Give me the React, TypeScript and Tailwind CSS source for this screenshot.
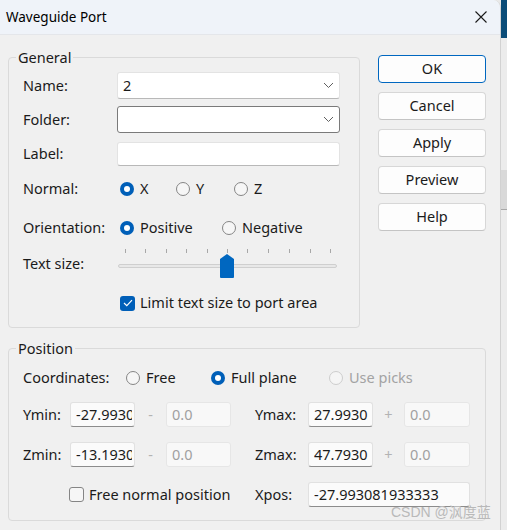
import React from 'react';

function Chevron() {
  return (
    <svg width="11" height="7" viewBox="0 0 11 7" className="shrink-0">
      <path d="M1 1 L5.5 5.5 L10 1" fill="none" stroke="#606060" strokeWidth="1" />
    </svg>
  );
}

function Combo({ value, focused }: { value?: string; focused?: boolean }) {
  return (
    <div
      className={
        focused
          ? 'w-[223px] h-full flex items-center justify-between pl-[5px] pr-[5px] bg-white rounded-[3px] border border-[#7a7a7a]'
          : 'w-[223px] h-full flex items-center justify-between pl-[5px] pr-[5px] bg-white rounded-[3px] border border-[#e3e3e3] border-b-[#b8b8b8]'
      }
    >
      <span>{value}</span>
      <Chevron />
    </div>
  );
}

function Radio({ label, checked, disabled }: { label: string; checked?: boolean; disabled?: boolean }) {
  return (
    <div className={disabled ? 'flex items-center gap-[6px] text-[#a3a3a3]' : 'flex items-center gap-[6px]'}>
      {checked ? (
        <span className="w-[14px] h-[14px] rounded-full bg-[#005fb8] flex items-center justify-center">
          <span className="w-[6px] h-[6px] rounded-full bg-white" />
        </span>
      ) : (
        <span
          className={
            disabled
              ? 'w-[14px] h-[14px] rounded-full bg-[#f5f5f5] border border-[#cdcdcd]'
              : 'w-[14px] h-[14px] rounded-full bg-[#f6f6f6] border border-[#858585]'
          }
        />
      )}
      <span>{label}</span>
    </div>
  );
}

function Check({ label, checked }: { label: string; checked?: boolean }) {
  return (
    <div className="flex items-center gap-[5px]">
      {checked ? (
        <span className="w-[15px] h-[15px] rounded-[3px] bg-[#005fb8] flex items-center justify-center">
          <svg width="10" height="8" viewBox="0 0 10 8">
            <path d="M1 4 L3.8 6.6 L9 1.2" fill="none" stroke="white" strokeWidth="1.2" />
          </svg>
        </span>
      ) : (
        <span className="w-[15px] h-[15px] rounded-[3px] bg-[#f6f6f6] border border-[#858585]" />
      )}
      <span>{label}</span>
    </div>
  );
}

function Field({ value, w }: { value: string; w: string }) {
  return (
    <div
      className={`${w} h-full flex items-center bg-[#fbfbfb] rounded-[3px] border border-[#e1e1e1] border-b-[#8c8c8c] pl-[5px] pr-[2px]`}
    >
      <div className="min-w-0 overflow-hidden whitespace-nowrap">{value}</div>
    </div>
  );
}

function Disabled({ w }: { w: string }) {
  return (
    <div className={`${w} h-full flex items-center bg-[#f8f8f8] rounded-[3px] border border-[#e6e6e6] pl-[5px] text-[#a0a0a0]`}>
      0.0
    </div>
  );
}

function Btn({ label, primary }: { label: string; primary?: boolean }) {
  return (
    <div
      className={
        primary
          ? 'h-[28px] flex items-center justify-center bg-[#fdfdfd] rounded-[4px] border border-[#0067c0]'
          : 'h-[28px] flex items-center justify-center bg-[#fdfdfd] rounded-[4px] border border-[#d7d7d7] border-b-[#c4c4c4]'
      }
    >
      {label}
    </div>
  );
}

function Slider() {
  const ticks = [8, 28, 49, 69, 90, 110, 130, 151, 172, 193, 213];
  return (
    <svg width="221" height="36" viewBox="0 0 221 36">
      {ticks.map((x) => (
        <line key={x} x1={x + 0.5} y1="3" x2={x + 0.5} y2="7" stroke="#a8a8a8" strokeWidth="1" />
      ))}
      <rect x="1.5" y="18.5" width="218" height="3" rx="1.5" fill="#e8e8e8" stroke="#cfcfcf" strokeWidth="1" />
      <path d="M103 13 L110 8 L117 13 L117 31 Q117 32 116 32 L104 32 Q103 32 103 31 Z" fill="#0067c0" />
    </svg>
  );
}

export default function App() {
  return (
    <div className="w-[507px] h-[530px] flex overflow-hidden relative bg-[#e9e9e9] font-['Noto_Sans','Noto_Sans_CJK_SC',sans-serif] text-[14.5px] text-[#1b1b1b]">
      {/* dialog window */}
      <div className="w-[501px] h-[530px] flex flex-col bg-[#f0f0f0] rounded-tr-[8px] border-r border-[#d2d2d2] overflow-hidden">
        {/* title bar */}
        <div className="h-[35px] shrink-0 flex items-center justify-between pl-[6px] pr-[13px] bg-[#eff3f9] border-b border-[#e4e6ea]">
          <span className="text-[13.5px] text-black">Waveguide Port</span>
          <svg width="12" height="12" viewBox="0 0 12 12">
            <path d="M0.5 0.5 L11.5 11.5 M11.5 0.5 L0.5 11.5" stroke="#1a1a1a" strokeWidth="1.1" />
          </svg>
        </div>

        {/* top: general + buttons */}
        <div className="flex pl-[8px] pt-[12px]">
          <fieldset className="w-[352px] border border-[#dadada] rounded-[4px] pl-[7px] pb-[14px]">
            <legend className="px-[2px] leading-[20px]">General</legend>
            <div className="pl-[7px] pt-[5px] flex flex-col">
              <div className="h-[27px] flex items-center">
                <span className="w-[94px]">Name:</span>
                <Combo value="2" />
              </div>
              <div className="h-[27px] mt-[7px] flex items-center">
                <span className="w-[94px]">Folder:</span>
                <Combo focused />
              </div>
              <div className="h-[24px] mt-[9px] flex items-center">
                <span className="w-[94px]">Label:</span>
                <div className="w-[223px] h-full bg-white rounded-[3px] border border-[#e3e3e3] border-b-[#b8b8b8]" />
              </div>
              <div className="h-[24px] mt-[11px] flex items-center">
                <span className="w-[97px]">Normal:</span>
                <div className="w-[56px]">
                  <Radio label="X" checked />
                </div>
                <div className="w-[58px]">
                  <Radio label="Y" />
                </div>
                <Radio label="Z" />
              </div>
              <div className="h-[24px] mt-[15px] flex items-center">
                <span className="w-[97px]">Orientation:</span>
                <div className="w-[102px]">
                  <Radio label="Positive" checked />
                </div>
                <Radio label="Negative" />
              </div>
              <div className="h-[36px] mt-[6px] flex items-center">
                <span className="w-[94px]">Text size:</span>
                <Slider />
              </div>
              <div className="h-[20px] mt-[11px] flex items-center pl-[97px]">
                <Check label="Limit text size to port area" checked />
              </div>
            </div>
          </fieldset>

          <div className="w-[108px] ml-[18px] mt-[8px] flex flex-col gap-[9px]">
            <Btn label="OK" primary />
            <Btn label="Cancel" />
            <Btn label="Apply" />
            <Btn label="Preview" />
            <Btn label="Help" />
          </div>
        </div>

        {/* position */}
        <fieldset className="ml-[8px] mt-[10px] w-[478px] border border-[#dadada] rounded-[4px] pl-[7px] pb-[13px]">
          <legend className="px-[2px] leading-[20px]">Position</legend>
          <div className="pl-[7px] pt-[10px] flex flex-col">
            <div className="h-[20px] flex items-center">
              <span className="w-[103px]">Coordinates:</span>
              <div className="w-[85px]">
                <Radio label="Free" />
              </div>
              <div className="w-[118px]">
                <Radio label="Full plane" checked />
              </div>
              <Radio label="Use picks" disabled />
            </div>
            <div className="h-[25px] mt-[14px] flex items-center">
              <span className="w-[47px]">Ymin:</span>
              <Field value="-27.9930" w="w-[65px]" />
              <span className="w-[31px] text-center text-[#b3b3b3]">-</span>
              <Disabled w="w-[65px]" />
              <span className="w-[53px] ml-[24px]">Ymax:</span>
              <Field value="27.9930" w="w-[65px]" />
              <span className="w-[31px] text-center text-[#b3b3b3]">+</span>
              <Disabled w="w-[66px]" />
            </div>
            <div className="h-[25px] mt-[15px] flex items-center">
              <span className="w-[47px]">Zmin:</span>
              <Field value="-13.1930" w="w-[65px]" />
              <span className="w-[31px] text-center text-[#b3b3b3]">-</span>
              <Disabled w="w-[65px]" />
              <span className="w-[53px] ml-[24px]">Zmax:</span>
              <Field value="47.7930" w="w-[65px]" />
              <span className="w-[31px] text-center text-[#b3b3b3]">+</span>
              <Disabled w="w-[66px]" />
            </div>
            <div className="h-[25px] mt-[15px] flex items-center">
              <div className="w-[232px] pl-[46px]">
                <Check label="Free normal position" />
              </div>
              <span className="w-[53px]">Xpos:</span>
              <Field value="-27.993081933333" w="w-[162px]" />
            </div>
          </div>
        </fieldset>
      </div>

      {/* background app strip */}
      <div className="w-[6px] flex flex-col">
        <div className="h-[38px] bg-[#0b4c78]" />
        <div className="h-[132px] bg-[#ececec]" />
        <div className="h-[40px] bg-[#d9d9d9] border-b border-[#a8a8a8]" />
        <div className="flex-1 bg-[#ececec]" />
      </div>

      {/* watermark */}
      <div className="absolute left-[391px] top-[502px] text-[14px] text-[#b9b9b9] font-['Liberation_Sans','Noto_Sans_CJK_SC',sans-serif]">
        CSDN @沨度蓝
      </div>
    </div>
  );
}
